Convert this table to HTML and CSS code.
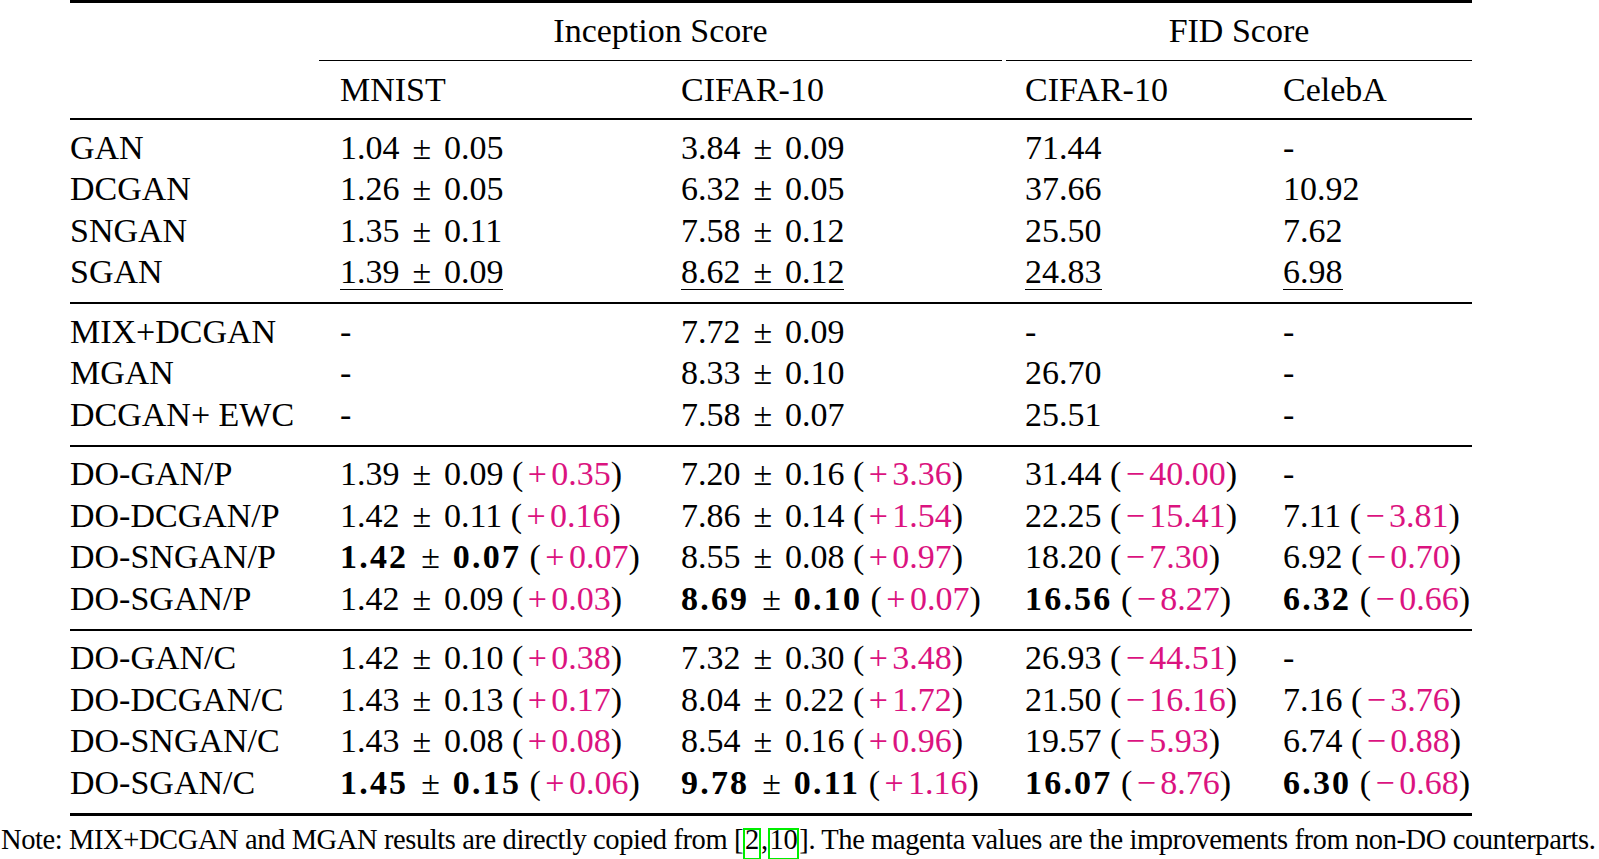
FILE: index.html
```html
<!DOCTYPE html>
<html>
<head>
<meta charset="utf-8">
<link rel="stylesheet" href="styles.css">
</head>
<body>
<div class="tbl">
  <div class="head">
    <div class="row">
      <span class="c0"></span>
      <span class="grp-title is">Inception Score</span>
      <span class="grp-title fid">FID Score</span>
    </div>
    <div class="row sub">
      <span class="c0"></span>
      <span class="c">MNIST</span>
      <span class="c">CIFAR-10</span>
      <span class="c">CIFAR-10</span>
      <span class="c">CelebA</span>
    </div>
  </div>

  <div class="grp">
    <div class="row"><span class="c0">GAN</span><span class="c">1.04<span class="pm">±</span>0.05</span><span class="c">3.84<span class="pm">±</span>0.09</span><span class="c">71.44</span><span class="c">-</span></div>
    <div class="row"><span class="c0">DCGAN</span><span class="c">1.26<span class="pm">±</span>0.05</span><span class="c">6.32<span class="pm">±</span>0.05</span><span class="c">37.66</span><span class="c">10.92</span></div>
    <div class="row"><span class="c0">SNGAN</span><span class="c">1.35<span class="pm">±</span>0.11</span><span class="c">7.58<span class="pm">±</span>0.12</span><span class="c">25.50</span><span class="c">7.62</span></div>
    <div class="row"><span class="c0">SGAN</span><span class="c"><span class="ul">1.39<span class="pm">±</span>0.09</span></span><span class="c"><span class="ul">8.62<span class="pm">±</span>0.12</span></span><span class="c"><span class="ul">24.83</span></span><span class="c"><span class="ul">6.98</span></span></div>
  </div>

  <div class="grp">
    <div class="row"><span class="c0">MIX+DCGAN</span><span class="c">-</span><span class="c">7.72<span class="pm">±</span>0.09</span><span class="c">-</span><span class="c">-</span></div>
    <div class="row"><span class="c0">MGAN</span><span class="c">-</span><span class="c">8.33<span class="pm">±</span>0.10</span><span class="c">26.70</span><span class="c">-</span></div>
    <div class="row"><span class="c0">DCGAN+ EWC</span><span class="c">-</span><span class="c">7.58<span class="pm">±</span>0.07</span><span class="c">25.51</span><span class="c">-</span></div>
  </div>

  <div class="grp">
    <div class="row"><span class="c0">DO-GAN/P</span><span class="c">1.39<span class="pm">±</span>0.09 (<span class="d"><span class="sg">+</span>0.35</span>)</span><span class="c">7.20<span class="pm">±</span>0.16 (<span class="d"><span class="sg">+</span>3.36</span>)</span><span class="c">31.44 (<span class="d"><span class="sg">−</span>40.00</span>)</span><span class="c">-</span></div>
    <div class="row"><span class="c0">DO-DCGAN/P</span><span class="c">1.42<span class="pm">±</span>0.11 (<span class="d"><span class="sg">+</span>0.16</span>)</span><span class="c">7.86<span class="pm">±</span>0.14 (<span class="d"><span class="sg">+</span>1.54</span>)</span><span class="c">22.25 (<span class="d"><span class="sg">−</span>15.41</span>)</span><span class="c">7.11 (<span class="d"><span class="sg">−</span>3.81</span>)</span></div>
    <div class="row"><span class="c0">DO-SNGAN/P</span><span class="c"><b class="b">1.42</b><span class="pm">±</span><b class="b">0.07</b> (<span class="d"><span class="sg">+</span>0.07</span>)</span><span class="c">8.55<span class="pm">±</span>0.08 (<span class="d"><span class="sg">+</span>0.97</span>)</span><span class="c">18.20 (<span class="d"><span class="sg">−</span>7.30</span>)</span><span class="c">6.92 (<span class="d"><span class="sg">−</span>0.70</span>)</span></div>
    <div class="row"><span class="c0">DO-SGAN/P</span><span class="c">1.42<span class="pm">±</span>0.09 (<span class="d"><span class="sg">+</span>0.03</span>)</span><span class="c"><b class="b">8.69</b><span class="pm">±</span><b class="b">0.10</b> (<span class="d"><span class="sg">+</span>0.07</span>)</span><span class="c"><b class="b">16.56</b> (<span class="d"><span class="sg">−</span>8.27</span>)</span><span class="c"><b class="b">6.32</b> (<span class="d"><span class="sg">−</span>0.66</span>)</span></div>
  </div>

  <div class="grp">
    <div class="row"><span class="c0">DO-GAN/C</span><span class="c">1.42<span class="pm">±</span>0.10 (<span class="d"><span class="sg">+</span>0.38</span>)</span><span class="c">7.32<span class="pm">±</span>0.30 (<span class="d"><span class="sg">+</span>3.48</span>)</span><span class="c">26.93 (<span class="d"><span class="sg">−</span>44.51</span>)</span><span class="c">-</span></div>
    <div class="row"><span class="c0">DO-DCGAN/C</span><span class="c">1.43<span class="pm">±</span>0.13 (<span class="d"><span class="sg">+</span>0.17</span>)</span><span class="c">8.04<span class="pm">±</span>0.22 (<span class="d"><span class="sg">+</span>1.72</span>)</span><span class="c">21.50 (<span class="d"><span class="sg">−</span>16.16</span>)</span><span class="c">7.16 (<span class="d"><span class="sg">−</span>3.76</span>)</span></div>
    <div class="row"><span class="c0">DO-SNGAN/C</span><span class="c">1.43<span class="pm">±</span>0.08 (<span class="d"><span class="sg">+</span>0.08</span>)</span><span class="c">8.54<span class="pm">±</span>0.16 (<span class="d"><span class="sg">+</span>0.96</span>)</span><span class="c">19.57 (<span class="d"><span class="sg">−</span>5.93</span>)</span><span class="c">6.74 (<span class="d"><span class="sg">−</span>0.88</span>)</span></div>
    <div class="row"><span class="c0">DO-SGAN/C</span><span class="c"><b class="b">1.45</b><span class="pm">±</span><b class="b">0.15</b> (<span class="d"><span class="sg">+</span>0.06</span>)</span><span class="c"><b class="b">9.78</b><span class="pm">±</span><b class="b">0.11</b> (<span class="d"><span class="sg">+</span>1.16</span>)</span><span class="c"><b class="b">16.07</b> (<span class="d"><span class="sg">−</span>8.76</span>)</span><span class="c"><b class="b">6.30</b> (<span class="d"><span class="sg">−</span>0.68</span>)</span></div>
  </div>
</div>
<p class="note">Note: MIX+DCGAN and MGAN results are directly copied from [<span class="cite">2</span>,<span class="cite">10</span>]. The magenta values are the improvements from non-DO counterparts.</p>
</body>
</html>
```

FILE: styles.css
```css
html, body {
  margin: 0;
  padding: 0;
  background: #ffffff;
}

body {
  font-family: "Liberation Serif", "Times New Roman", serif;
  color: #000000;
}

.tbl {
  margin-left: 70px;
  width: 1402px;
  border-top: 3px solid #000;
  border-bottom: 3px solid #000;
  font-size: 34px;
  line-height: 41.5px;
}

.row {
  display: grid;
  grid-template-columns: 249px 341px 344px 258px 210px;
  white-space: nowrap;
}

.head {
  padding-top: 6.8px;
  padding-bottom: 7.7px;
  border-bottom: 2px solid #000;
}

.grp-title {
  grid-column: span 2;
  text-align: center;
  padding-bottom: 8.7px;
  border-bottom: 1.5px solid #000;
}

.grp-title.is {
  margin-right: 2px;
}

.grp-title.fid {
  margin-left: 2px;
}

.sub {
  margin-top: 8.3px;
}

.c0 {
  padding-left: 0;
}

.c {
  padding-left: 21px;
}

.grp {
  padding: 6.3px 0 9.7px;
}

.grp:not(:last-child) {
  border-bottom: 2px solid #000;
}

.pm {
  margin: 0 0.38em;
}

.b {
  font-weight: bold;
  letter-spacing: 2.2px;
}

.d {
  color: #db137f;
}

.sg {
  margin: 0 0.13em;
}

.ul {
  display: inline-block;
  line-height: 34px;
  border-bottom: 1.5px solid #000;
}

.note {
  margin: 8px 0 0 1px;
  font-size: 28.5px;
  line-height: 32px;
  white-space: nowrap;
  letter-spacing: -0.4px;
}

.cite {
  display: inline-block;
  height: 28px;
  line-height: 19px;
  border: 2px solid #00ee00;
}
```
